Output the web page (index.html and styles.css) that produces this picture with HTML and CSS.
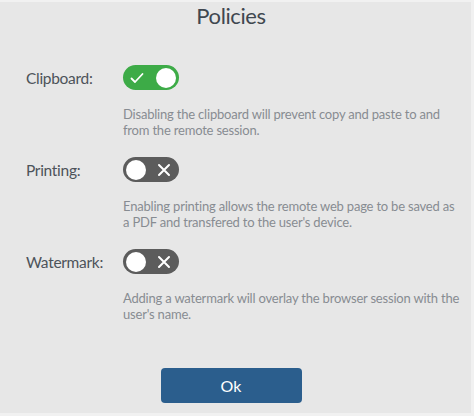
FILE: index.html
```html
<!DOCTYPE html>
<html>
<head>
<meta charset="utf-8">
<link rel="stylesheet" href="styles.css">
</head>
<body>
<div class="panel">
  <h1 class="title">Policies</h1>
  <div class="policies">
    <div class="policy">
      <div class="label">Clipboard:</div>
      <div class="toggle on" role="switch" aria-checked="true">
        <svg class="icon check" viewBox="0 0 16 16" width="16" height="16"><path d="M2.5 8.5 L6 12 L13.5 4" fill="none" stroke="#fff" stroke-width="1.8" stroke-linecap="round" stroke-linejoin="round"/></svg>
        <span class="knob"></span>
      </div>
      <p class="desc">Disabling the clipboard will prevent copy and paste to and from the remote session.</p>
    </div>
    <div class="policy">
      <div class="label">Printing:</div>
      <div class="toggle off" role="switch" aria-checked="false">
        <span class="knob"></span>
        <svg class="icon cross" viewBox="0 0 16 16" width="16" height="16"><path d="M3 3 L13 13 M13 3 L3 13" fill="none" stroke="#fff" stroke-width="2" stroke-linecap="round"/></svg>
      </div>
      <p class="desc">Enabling printing allows the remote web page to be saved as a PDF and transfered to the user's device.</p>
    </div>
    <div class="policy">
      <div class="label">Watermark:</div>
      <div class="toggle off" role="switch" aria-checked="false">
        <span class="knob"></span>
        <svg class="icon cross" viewBox="0 0 16 16" width="16" height="16"><path d="M3 3 L13 13 M13 3 L3 13" fill="none" stroke="#fff" stroke-width="2" stroke-linecap="round"/></svg>
      </div>
      <p class="desc">Adding a watermark will overlay the browser session with the user's name.</p>
    </div>
  </div>
  <div class="actions">
    <button class="ok">Ok</button>
  </div>
</div>
</body>
</html>
```
FILE: styles.css
```css
html, body {
  margin: 0;
  padding: 0;
  background: #f1f1f1;
}
body {
  font-family: "Lato", "Open Sans", sans-serif;
  width: 474px;
  height: 416px;
}
.panel {
  box-sizing: border-box;
  margin: 2px 3px 0 0;
  height: 411px;
  background: #e7e7e7;
  padding: 0;
}
.title {
  margin: 0;
  width: 462px;
  text-align: center;
  font-size: 22px;
  letter-spacing: -0.4px;
  font-weight: 400;
  line-height: 28px;
  color: #3f4750;
}
.policies {
  margin-top: 35px;
  padding-left: 26px;
  display: flex;
  flex-direction: column;
  gap: 19px;
}
.policy {
  display: grid;
  grid-template-columns: 97px 1fr;
  grid-template-rows: 25px auto;
  row-gap: 16px;
  align-items: center;
}
.label {
  font-size: 15.5px;
  letter-spacing: -0.3px;
  color: #4d535a;
  line-height: 20px;
}
.toggle {
  box-sizing: border-box;
  width: 56px;
  height: 25px;
  border-radius: 13px;
  display: flex;
  align-items: center;
  justify-content: space-between;
  padding: 0 3px 0 6px;
}
.toggle.on {
  background: #3dab47;
}
.toggle.off {
  background: #5c5c5c;
  padding: 0 7px 0 3px;
}
.knob {
  width: 20px;
  height: 20px;
  border-radius: 50%;
  background: #fff;
}
.icon {
  display: block;
}
.desc {
  grid-column: 2;
  margin: 0;
  padding-right: 11px;
  font-size: 13px;
  letter-spacing: -0.2px;
  line-height: 16px;
  color: #878c92;
}
.actions {
  width: 462px;
  display: flex;
  justify-content: center;
  margin-top: 46px;
}
.ok {
  width: 141px;
  height: 35px;
  border: none;
  border-radius: 4px;
  background: #2b5e8d;
  color: #fff;
  font-family: inherit;
  font-size: 16px;
}
```
